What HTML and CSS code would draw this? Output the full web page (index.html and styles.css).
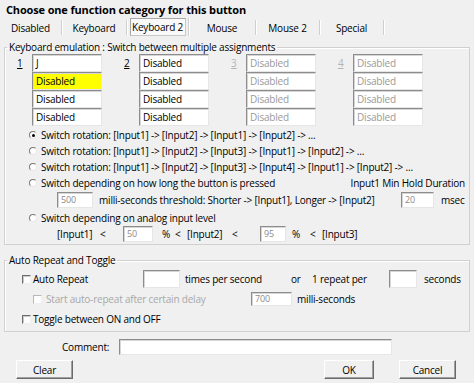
FILE: index.html
```html
<!DOCTYPE html>
<html>
<head>
<meta charset="utf-8">
<link rel="stylesheet" href="styles.css">
</head>
<body>
<div class="dlg">
  <div class="title">Choose one function category for this button</div>
  <div class="tabs">
    <div class="tab t1">Disabled</div>
    <div class="tab t2">Keyboard</div>
    <div class="tab t3"><span class="sel">Keyboard 2</span></div>
    <div class="tab t4">Mouse</div>
    <div class="tab t5">Mouse 2</div>
    <div class="tab t6">Special</div>
  </div>

  <fieldset class="grp g1">
    <legend>Keyboard emulation : Switch between multiple assignments</legend>
    <div class="cols">
      <div class="col">
        <div class="num"><u>1</u></div>
        <div class="stack">
          <div class="edit">J</div>
          <div class="edit yellow">Disabled</div>
          <div class="edit">Disabled</div>
          <div class="edit">Disabled</div>
        </div>
      </div>
      <div class="col">
        <div class="num"><u>2</u></div>
        <div class="stack">
          <div class="edit">Disabled</div>
          <div class="edit">Disabled</div>
          <div class="edit">Disabled</div>
          <div class="edit">Disabled</div>
        </div>
      </div>
      <div class="col dis">
        <div class="num"><u>3</u></div>
        <div class="stack">
          <div class="edit">Disabled</div>
          <div class="edit">Disabled</div>
          <div class="edit">Disabled</div>
          <div class="edit">Disabled</div>
        </div>
      </div>
      <div class="col dis">
        <div class="num"><u>4</u></div>
        <div class="stack">
          <div class="edit">Disabled</div>
          <div class="edit">Disabled</div>
          <div class="edit">Disabled</div>
          <div class="edit">Disabled</div>
        </div>
      </div>
    </div>

    <div class="rrow first"><span class="radio on"></span><span>Switch rotation: [Input1] -&gt; [Input2] -&gt; [Input1] -&gt; [Input2] -&gt; ...</span></div>
    <div class="rrow"><span class="radio"></span><span>Switch rotation: [Input1] -&gt; [Input2] -&gt; [Input3] -&gt; [Input1] -&gt; [Input2] -&gt; ...</span></div>
    <div class="rrow"><span class="radio"></span><span>Switch rotation: [Input1] -&gt; [Input2] -&gt; [Input3] -&gt; [Input4] -&gt; [Input1] -&gt; [Input2] -&gt; ...</span></div>
    <div class="rrow"><span class="radio"></span><span>Switch depending on how long the button is pressed</span><span class="hold">Input1 Min Hold Duration</span></div>
    <div class="trow">
      <div class="edit sm w500">500</div>
      <span class="thr">milli-seconds threshold: Shorter -&gt; [Input1], Longer -&gt; [Input2]</span>
      <div class="edit sm w20">20</div>
      <span class="msec">msec</span>
    </div>
    <div class="rrow r5"><span class="radio"></span><span>Switch depending on analog input level</span></div>
    <div class="arow">
      <span class="a-in1">[Input1]</span>
      <span class="a-lt1">&lt;</span>
      <div class="edit sm w50">50</div>
      <span class="a-pc1">%</span>
      <span class="a-lt2">&lt;</span>
      <span class="a-in2">[Input2]</span>
      <span class="a-lt3">&lt;</span>
      <div class="edit sm w95">95</div>
      <span class="a-pc2">%</span>
      <span class="a-lt4">&lt;</span>
      <span>[Input3]</span>
    </div>
  </fieldset>

  <fieldset class="grp g2">
    <legend>Auto Repeat and Toggle</legend>
    <div class="crow c1">
      <span class="check"></span>
      <span class="c-lbl">Auto Repeat</span>
      <div class="edit tps"></div>
      <span class="c-tps">times per second</span>
      <span class="c-or">or</span>
      <span class="c-rep">1 repeat per</span>
      <div class="edit sec"></div>
      <span class="c-sec">seconds</span>
    </div>
    <div class="crow c2">
      <span class="check dis"></span>
      <span class="c-lbl2">Start auto-repeat after certain delay</span>
      <div class="edit sm w700">700</div>
      <span class="c-ms">milli-seconds</span>
    </div>
    <div class="crow c3">
      <span class="check"></span>
      <span>Toggle between ON and OFF</span>
    </div>
  </fieldset>

  <div class="comment">
    <span class="cm-lbl">Comment:</span>
    <div class="edit cm-in"></div>
  </div>

  <div class="buttons">
    <div class="btn clear">Clear</div>
    <div class="btn ok">OK</div>
    <div class="btn cancel">Cancel</div>
  </div>
</div>
</body>
</html>
```

FILE: styles.css
```css
* { box-sizing: border-box; }
html, body { margin: 0; padding: 0; }
body {
  background: #f0f0f0;
  font-family: "Open Sans", "Noto Sans", sans-serif;
  font-size: 10px;
  letter-spacing: -0.2px;
  color: #000;
  width: 474px;
  height: 383px;
  overflow: hidden;
}
.dlg { width: 474px; }

.title {
  height: 18px;
  padding: 2px 0 0 6px;
  font-weight: bold;
  font-size: 11px;
  letter-spacing: -0.15px;
  line-height: 15px;
}

.tabs {
  display: flex;
  height: 18px;
  align-items: stretch;
}
.tab {
  display: flex;
  align-items: center;
  justify-content: center;
  border-right: 1px solid #cfcfcf;
  box-shadow: 1px 0 0 #fff;
  margin: 2px 0 1px;
  white-space: nowrap;
}
.t1 { width: 62px; }
.t2 { width: 65px; }
.t3 { width: 62px; margin: 0; padding: 0 2px; }
.t4 { width: 67px; }
.t5 { width: 64px; }
.t6 { width: 64px; }
.sel {
  display: flex;
  align-items: center;
  justify-content: center;
  width: 56px;
  height: 18px;
  background: #f9f9f9;
  border: 1px solid #a8a8a8;
  border-right-color: #c8c8c8;
  border-bottom-color: #c8c8c8;
}

.grp {
  margin: 5px 4px 0;
  padding: 0;
  border: 1px solid #d0d0d0;
  box-shadow: inset 1px 1px 0 #fff;
  min-width: 0;
}
.grp legend {
  padding: 0 2px;
  margin-left: 2px;
  line-height: 13px;
  height: 13px;
}

.edit {
  background: #fff;
  border-top: 1px solid #8c8c8c;
  border-left: 1px solid #8c8c8c;
  border-right: 1px solid #e6e6e6;
  border-bottom: 1px solid #e6e6e6;
  box-shadow: inset 1px 1px 0 #d6d6d6;
  height: 18px;
  padding-left: 3px;
  line-height: 16px;
  white-space: nowrap;
}
.edit.yellow { background: #ffff00; }
.edit.sm { color: #8a8a8a; height: 16px; line-height: 14px; font-size: 9px; }

.cols { display: flex; padding-left: 12px; }
.col { display: flex; width: 107px; }
.num { width: 15px; line-height: 18px; }
.stack { width: 70px; }
.col.dis { color: #9a9a9a; }
.col.dis .num { color: #b4b4b4; }

.rrow {
  display: flex;
  align-items: center;
  height: 16px;
  padding-left: 24px;
  white-space: nowrap;
}
.rrow.first { margin-top: 1px; }
.radio {
  width: 8px;
  height: 8px;
  border-radius: 50%;
  background: #fff;
  border: 1px solid;
  border-color: #7a7a7a #e8e8e8 #e8e8e8 #7a7a7a;
  margin-right: 4px;
  position: relative;
  flex: none;
}
.radio.on::after {
  content: "";
  position: absolute;
  left: 1.5px; top: 1.5px;
  width: 3px; height: 3px;
  border-radius: 50%;
  background: #000;
}
.hold { margin-left: auto; margin-right: 4px; }

.trow {
  display: flex;
  align-items: center;
  height: 16px;
  margin-top: 1px;
  padding-left: 52px;
  white-space: nowrap;
}
.w500 { width: 36px; }
.thr { width: 308px; padding-left: 6px; }
.w20 { width: 33px; }
.msec { margin-left: 7px; }

.rrow.r5 { margin-top: 2px; }

.arow {
  display: flex;
  align-items: center;
  height: 16px;
  padding-left: 52px;
  margin-bottom: 2px;
  white-space: nowrap;
}
.a-in1 { width: 43px; }
.a-lt1 { width: 23px; }
.w50 { width: 30px; }
.a-pc1 { width: 22px; padding-left: 9px; }
.a-lt2 { width: 12px; }
.a-in2 { width: 45px; }
.a-lt3 { width: 28px; }
.w95 { width: 26px; }
.a-pc2 { width: 24px; padding-left: 6px; }
.a-lt4 { width: 12px; }

.g2 { margin-top: 9px; }
.crow { display: flex; align-items: center; white-space: nowrap; }
.check {
  width: 9px;
  height: 9px;
  background: #fdfdfd;
  border: 1px solid;
  border-color: #6e6e6e #f0f0f0 #f0f0f0 #6e6e6e;
  box-shadow: inset 1px 1px 0 #c8c8c8;
  margin-right: 2px;
  flex: none;
}
.check.dis { border-color: #b8b8b8 #f0f0f0 #f0f0f0 #b8b8b8; box-shadow: none; }
.c1 { height: 18px; margin-top: 3px; padding-left: 17px; }
.c-lbl { width: 110px; }
.tps { width: 37px; }
.c-tps { width: 111px; padding-left: 5px; }
.c-or { width: 21px; }
.c-rep { width: 77px; }
.sec { width: 28px; }
.c-sec { padding-left: 7px; }
.c2 { height: 14px; margin-top: 4px; padding-left: 28px; color: #a8a8a8; }
.c-lbl2 { width: 207px; padding-left: 2px; }
.edit.w700 { width: 41px; height: 14px; line-height: 12px; }
.c-ms { padding-left: 5px; color: #000; }
.c3 { height: 16px; margin-top: 5px; padding-left: 17px; margin-bottom: 4px; }

.comment {
  display: flex;
  align-items: center;
  margin-top: 7px;
  padding-left: 62px;
  height: 16px;
}
.cm-lbl { width: 57px; }
.cm-in { width: 273px; height: 16px; }

.buttons {
  display: flex;
  margin-top: 5px;
  height: 19px;
}
.btn {
  display: flex;
  align-items: center;
  justify-content: center;
  height: 19px;
  background: #f0f0f0;
  border: 1px solid;
  border-color: #fff #6a6a6a #6a6a6a #fff;
  box-shadow: inset -1px -1px 0 #a0a0a0;
}
.clear { margin-left: 16px; width: 57px; }
.ok { margin-left: 251px; width: 50px; }
.cancel { margin-left: 25px; width: 57px; }
```
